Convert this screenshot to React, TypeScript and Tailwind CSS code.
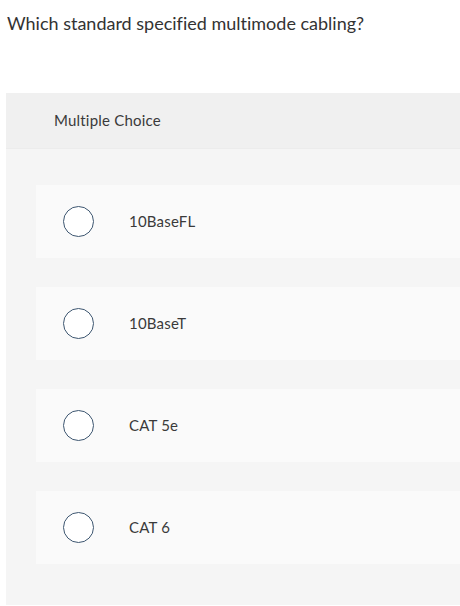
const options = ["10BaseFL", "10BaseT", "CAT 5e", "CAT 6"];

export default function App() {
  return (
    <div className="min-h-screen bg-white font-['Lato','Open_Sans',sans-serif] text-[#333] [font-variant-ligatures:none]">
      <h1 className="pl-[7px] pt-[11px] text-[18px] leading-[24px] font-normal text-[#333]">
        Which standard specified multimode cabling?
      </h1>

      <div className="ml-[6px] mt-[58px] bg-[#f5f5f5]">
        <div className="h-[56px] flex items-center pl-[48px] bg-[#f0f0f0] border-b border-[#ececec]">
          <span className="text-[15px] text-[#3a3a3a] tracking-[0.2px]">Multiple Choice</span>
        </div>

        <div className="flex flex-col gap-[29px] pl-[30px] pt-[36px] pb-[41px]">
          {options.map((opt) => (
            <div key={opt} className="h-[73px] flex items-center pl-[27px] bg-[#fafafa]">
              <span className="w-[31px] h-[31px] rounded-full border border-[#3d5670] bg-white shrink-0" />
              <span className="ml-[35px] text-[15px] text-[#3a3a3a] tracking-[0.2px]">{opt}</span>
            </div>
          ))}
        </div>
      </div>
    </div>
  );
}
